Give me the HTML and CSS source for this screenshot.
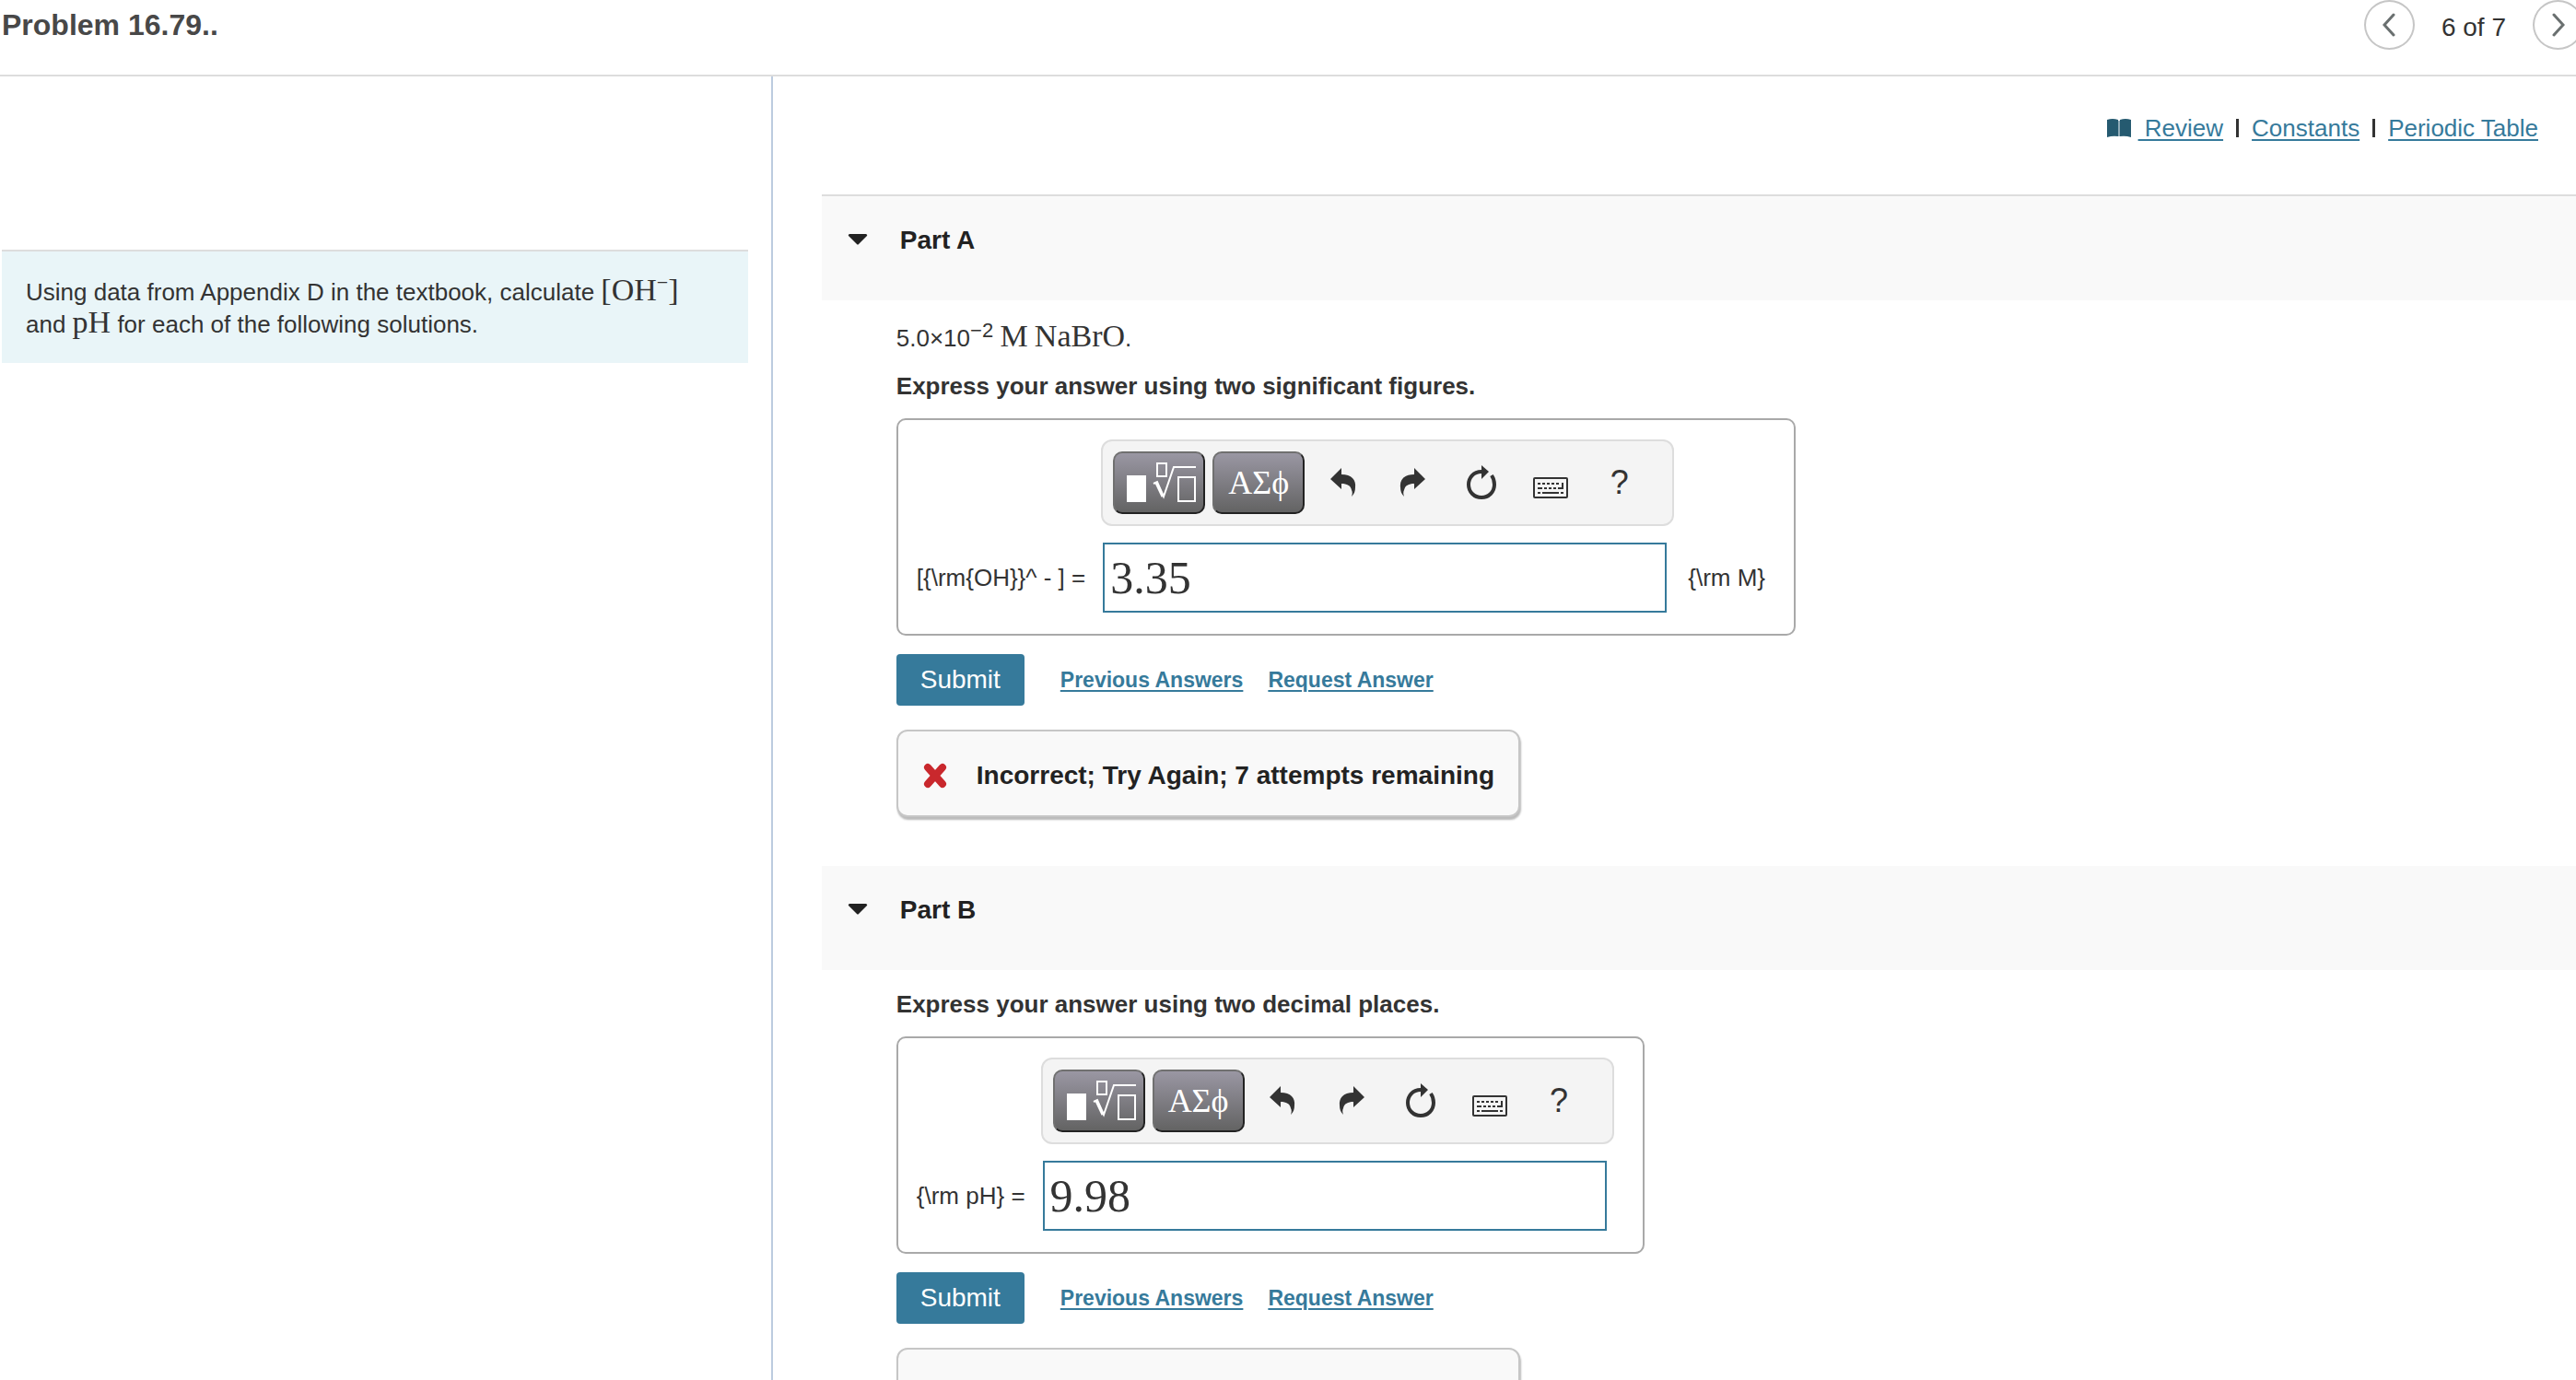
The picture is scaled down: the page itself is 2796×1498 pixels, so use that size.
FILE: index.html
```html
<!DOCTYPE html>
<html lang="en">
<head>
<meta charset="utf-8">
<title>Problem 16.79</title>
<link rel="stylesheet" href="styles.css">
</head>
<body>
<svg class="sprite" aria-hidden="true">
  <symbol id="i-template" viewBox="0 0 96 64">
    <rect x="13" y="24" width="21" height="29" fill="#fff"/>
    <rect x="46" y="11" width="10" height="14" fill="none" stroke="#fff" stroke-width="2"/>
    <rect x="69" y="26" width="18" height="26" fill="none" stroke="#fff" stroke-width="2"/>
    <path d="M42 33l4-2 7 16 11-32h24" fill="none" stroke="#fff" stroke-width="2"/>
    <path d="M45 32l7 15" stroke="#fff" stroke-width="3"/>
  </symbol>
  <symbol id="i-undo" viewBox="0 0 28 32">
    <path d="M0 12L12 0v7C23 7 28 13 27 21c0 4-1 7-4 10 1-3 1-5 0-7-1-5-5-7-11-7v6z" fill="#333"/>
  </symbol>
  <symbol id="i-reset" viewBox="0 0 32 38">
    <path d="M16 7C7 7 2 14 2 21c0 8 6 14 14 14s14-6 14-14c0-4-1-7-3-10" fill="none" stroke="#333" stroke-width="4"/>
    <path d="M16 0l8 7-8 8z" fill="#333"/>
  </symbol>
  <symbol id="i-keyboard" viewBox="0 0 40 26">
    <rect x="2" y="3" width="36" height="21" rx="1" fill="none" stroke="#333" stroke-width="2"/>
    <path d="M6 9h24" stroke="#333" stroke-width="2" stroke-dasharray="3 2"/>
    <path d="M6 14h5M13 14h3M18 14h3M23 14h3M28 14h5V8M6 19h3M11 19h18M31 19h3" fill="none" stroke="#333" stroke-width="2"/>
  </symbol>
  <symbol id="i-cross" viewBox="0 0 28 28">
    <path d="M6 5l16 18M22 5L6 23" stroke="#c9282d" stroke-width="8" stroke-linecap="round"/>
  </symbol>
  <symbol id="i-caret" viewBox="0 0 22 12">
    <path d="M2 0h18q2 1 1 2l-9 9q-1 1-2 0L1 2q-1-1 1-2z" fill="#222"/>
  </symbol>
</svg>

<header class="topbar">
  <h1 class="title">Problem 16.79..</h1>
  <nav class="pager" aria-label="Problems">
    <button class="pager-btn" aria-label="Previous problem"><svg width="14" height="26" viewBox="0 0 14 26"><path d="M12 2L2 13l10 11" fill="none" stroke="#6a7070" stroke-width="3" stroke-linecap="round"/></svg></button>
    <span class="pager-text">6 of 7</span>
    <button class="pager-btn" aria-label="Next problem"><svg width="14" height="26" viewBox="0 0 14 26"><path d="M2 2l10 11L2 24" fill="none" stroke="#6a7070" stroke-width="3" stroke-linecap="round"/></svg></button>
  </nav>
</header>

<div class="layout">
  <aside class="sidebar">
    <p class="intro">Using data from Appendix D in the textbook, calculate <span class="math">[OH<sup class="math-sup">−</sup>]</span><br>and <span class="math">pH</span> for each of the following solutions.</p>
  </aside>

  <main class="content">
    <nav class="resources" aria-label="Resources">
      <svg class="book" width="26" height="22" viewBox="0 0 26 22"><path d="M0 2q6-2 12 0v18q-6-1-12 1zM14 2q6-2 12 0v19q-6-2-12-1z" fill="#255a70"/><path d="M13 3v17" stroke="#8fabb8" stroke-width="2"/></svg>
      <a class="review" href="#">&nbsp;Review</a>
      <span class="bar"></span>
      <a href="#">Constants</a>
      <span class="bar"></span>
      <a href="#">Periodic Table</a>
    </nav>

    <section class="part">
      <h2 class="part-head part-head-first"><svg class="caret"><use href="#i-caret"/></svg>Part A</h2>
      <div class="part-body">
        <p class="question">5.0×10<sup class="exp">−2</sup> <span class="formula">M</span> <span class="formula">NaBrO</span>.</p>
        <p class="instruction">Express your answer using two significant figures.</p>
        <div class="answer">
          <div class="toolbar">
            <button class="tool" aria-label="Templates"><svg width="96" height="64"><use href="#i-template"/></svg></button>
            <button class="tool">ΑΣϕ</button>
            <button class="icon" aria-label="Undo"><svg width="28" height="32"><use href="#i-undo"/></svg></button>
            <button class="icon" aria-label="Redo"><svg class="flip" width="28" height="32"><use href="#i-undo"/></svg></button>
            <button class="icon" aria-label="Reset"><svg width="32" height="38"><use href="#i-reset"/></svg></button>
            <button class="icon icon-keyboard" aria-label="Keyboard shortcuts"><svg width="40" height="26"><use href="#i-keyboard"/></svg></button>
            <button class="icon">?</button>
          </div>
          <label class="lhs" for="ans-a">[{\rm{OH}}^ - ] =</label>
          <input class="field" id="ans-a" type="text" value="3.35">
          <span class="unit">{\rm M}</span>
        </div>
        <div class="actions">
          <button class="submit">Submit</button>
          <a href="#">Previous Answers</a>
          <a href="#">Request Answer</a>
        </div>
        <div class="feedback"><svg width="28" height="28"><use href="#i-cross"/></svg>Incorrect; Try Again; 7 attempts remaining</div>
      </div>
    </section>

    <section class="part">
      <h2 class="part-head"><svg class="caret"><use href="#i-caret"/></svg>Part B</h2>
      <div class="part-body">
        <p class="instruction">Express your answer using two decimal places.</p>
        <div class="answer">
          <div class="toolbar">
            <button class="tool" aria-label="Templates"><svg width="96" height="64"><use href="#i-template"/></svg></button>
            <button class="tool">ΑΣϕ</button>
            <button class="icon" aria-label="Undo"><svg width="28" height="32"><use href="#i-undo"/></svg></button>
            <button class="icon" aria-label="Redo"><svg class="flip" width="28" height="32"><use href="#i-undo"/></svg></button>
            <button class="icon" aria-label="Reset"><svg width="32" height="38"><use href="#i-reset"/></svg></button>
            <button class="icon icon-keyboard" aria-label="Keyboard shortcuts"><svg width="40" height="26"><use href="#i-keyboard"/></svg></button>
            <button class="icon">?</button>
          </div>
          <label class="lhs" for="ans-b">{\rm pH} =</label>
          <input class="field" id="ans-b" type="text" value="9.98">
        </div>
        <div class="actions">
          <button class="submit">Submit</button>
          <a href="#">Previous Answers</a>
          <a href="#">Request Answer</a>
        </div>
        <div class="feedback feedback-wide"></div>
      </div>
    </section>
  </main>
</div>
</body>
</html>
```
FILE: styles.css
```css
* { box-sizing: border-box; }

body {
  margin: 0;
  height: 100vh;
  overflow: hidden;
  display: flex;
  flex-direction: column;
  background: #fff;
  color: #333;
  font: 26px/36px "Liberation Sans", Arial, sans-serif;
}

h1, h2, p { margin: 0; }
a { color: #367a9b; text-decoration-thickness: 2px; text-underline-offset: 3px; }
button { font-family: inherit; padding: 0; cursor: pointer; }
svg { display: block; flex: none; }
.sprite { position: absolute; width: 0; height: 0; }

/* Top bar */
.topbar {
  flex: none;
  display: flex;
  justify-content: space-between;
  align-items: flex-start;
  height: 83px;
  border-bottom: 2px solid #ddd;
}
.title { padding: 9px 2px; font-size: 32px; line-height: 36px; color: #484848; }
.pager { display: flex; align-items: center; gap: 29px; margin-right: -8px; }
.pager-btn {
  display: flex;
  align-items: center;
  justify-content: center;
  width: 55px;
  height: 54px;
  border: 2px solid #c6c6c6;
  border-radius: 50%;
  background: #fff;
}
.pager-text { padding-top: 6px; font-size: 28px; }

/* Columns */
.layout { flex: 1 0 auto; display: flex; }
.sidebar { width: 30%; padding: 188px 25px 0 2px; border-right: 2px solid #bccbdf; }
.intro {
  padding: 27px 26px 24px;
  border-top: 2px solid #ddd;
  background: #e9f5f8;
  line-height: 35px;
  white-space: nowrap;
}
.math { font: 34px/30px "Liberation Serif", serif; }
.math-sup { font-size: 22px; line-height: 0; }
.content { flex: 1; min-width: 0; padding: 38px 0 0 53px; }

.resources {
  display: flex;
  align-items: center;
  justify-content: flex-end;
  gap: 14px;
  padding-right: 41px;
  margin-bottom: 54px;
}
.book { margin-right: -6px; }
.bar { width: 3px; height: 20px; background: #333; }

/* Parts */
.part { margin-bottom: 53px; }
.part-head {
  display: flex;
  align-items: center;
  gap: 35px;
  padding: 30px 28px 47px;
  background: #f9f9f9;
  color: #222;
  font-size: 28px;
  line-height: 36px;
}
.part-head-first { border-top: 2px solid #ddd; }
.caret { width: 22px; height: 12px; margin-bottom: 2px; }
.part-body {
  display: flex;
  flex-direction: column;
  align-items: flex-start;
  padding: 19px 0 0 81px;
}
.question { margin-bottom: 11px; line-height: 45px; }
.exp { font-size: 22px; line-height: 0; }
.formula { font: 34px/36px "Liberation Serif", serif; }
.instruction { font-weight: bold; margin-bottom: 17px; }

.answer {
  display: grid;
  grid-template-columns: auto auto auto;
  align-items: center;
  row-gap: 18px;
  padding: 21px 31px 23px 20px;
  border: 2px solid #a9a9a9;
  border-radius: 10px;
}
.toolbar {
  grid-column: 2;
  display: flex;
  align-items: center;
  width: 622px;
  height: 94px;
  padding-left: 11px;
  border: 2px solid #ddd;
  border-radius: 12px;
  background: #f4f4f4;
}
.tool {
  width: 100px;
  height: 68px;
  margin-right: 8px;
  border: 2px solid;
  border-color: #707070 #222 #222 #707070;
  border-radius: 10px;
  background: linear-gradient(#9a97a3, #636363);
  color: #fff;
  font: 36px/60px "Liberation Serif", serif;
}
.icon {
  display: flex;
  align-items: center;
  justify-content: center;
  width: 75px;
  height: 68px;
  border: 0;
  background: none;
  color: #333;
  font-size: 36px;
}
.tool + .icon { margin-left: -4px; }
.icon-keyboard { padding-top: 10px; }
.flip { transform: scaleX(-1); }
.lhs { grid-column: 1; padding-right: 17px; }
.field {
  grid-column: 2;
  width: 612px;
  height: 76px;
  margin-left: 2px;
  padding: 0 6px;
  border: 2px solid #367a9b;
  background: #fff;
  color: #333;
  font: 50px "Liberation Serif", serif;
}
.unit { grid-column: 3; padding-left: 15px; }

.actions { display: flex; align-items: center; gap: 27px; margin: 20px 0 26px; }
.actions a { font-size: 23px; font-weight: bold; }
.submit {
  width: 139px;
  height: 56px;
  margin-right: 12px;
  border: 0;
  border-radius: 4px;
  background: #367a9b;
  color: #fff;
  font-size: 28px;
}
.feedback {
  display: flex;
  align-items: center;
  gap: 31px;
  height: 95px;
  padding: 5px 26px 0;
  border: 2px solid #c6c6c6;
  border-radius: 12px;
  background: #f9f9f9;
  box-shadow: 1px 3px 2px #bbb;
  color: #222;
  font-size: 28px;
  font-weight: bold;
}
.feedback-wide { width: 677px; }
```
